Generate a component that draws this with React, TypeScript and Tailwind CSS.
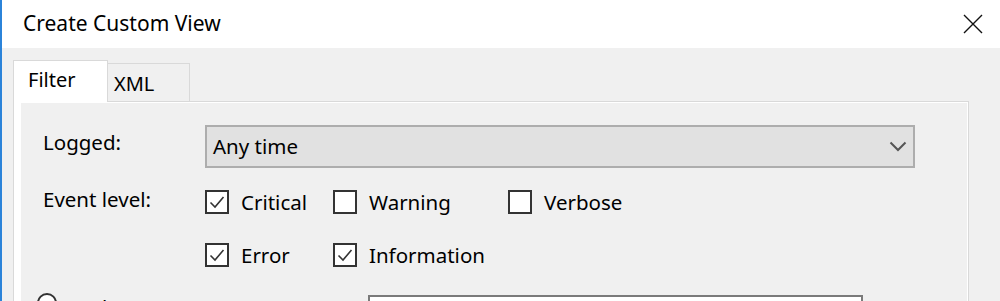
import React from 'react';

const font = { fontFamily: '"Noto Sans", "Open Sans", sans-serif' };

const CheckBox = ({ checked, label }: { checked: boolean; label: string }) => (
    <div className="flex items-center">
        <div className="w-[24px] h-[24px] border-2 border-[#333333] bg-white flex items-center justify-center">
            {checked && (
                <svg width="16" height="14" viewBox="0 0 16 14">
                    <path d="M1.5 7.5 L6 12 L14.5 2" fill="none" stroke="#333333" strokeWidth="1.6" />
                </svg>
            )}
        </div>
        <span className="ml-[12px] text-[20.5px] leading-none text-black">{label}</span>
    </div>
);

const App = () => {
    return (
        <div
            className="w-[1000px] h-[301px] overflow-hidden bg-[#f0f0f0] border-l-2 border-[#2b83d9] flex flex-col"
            style={font}
        >
            {/* title bar */}
            <div className="h-[48px] shrink-0 bg-white flex items-center justify-between pl-[21px] pr-[17px]">
                <span className="text-[21px] text-black">Create Custom View</span>
                <svg width="20" height="20" viewBox="0 0 20 20">
                    <path d="M1 1 L19 19 M19 1 L1 19" stroke="#111111" strokeWidth="1.4" />
                </svg>
            </div>

            <div className="pl-[11px] pt-[12px] pr-[31px] flex-1">
                {/* tabs */}
                <div className="flex items-end relative z-10">
                    <div className="w-[95px] h-[42px] -mb-px bg-white border border-b-0 border-[#d9d9d9] pl-[14px] pt-[4px] text-[20px] text-black">
                        Filter
                    </div>
                    <div className="w-[82px] h-[38px] border border-l-0 border-b-0 border-[#d9d9d9] bg-[#f0f0f0] pl-[6px] pt-[5px] text-[20px] text-black">
                        XML
                    </div>
                </div>

                {/* tab page */}
                <div className="border border-[#d9d9d9] bg-white pl-[7px] pt-[1px] pr-[1px] h-[220px]">
                    <div className="bg-[#f0f0f0] h-full pl-[22px] pt-[22px] text-[20.5px] text-black">
                        <div className="flex items-center h-[43px]">
                            <div className="w-[162px] -mt-[9px]">Logged:</div>
                            <div className="w-[710px] h-[43px] bg-[#e1e1e1] border-2 border-[#adadad] flex items-center justify-between pl-[6px] pr-[6px]">
                                <span>Any time</span>
                                <svg width="18" height="11" viewBox="0 0 18 11">
                                    <path d="M1.5 1.5 L9 9 L16.5 1.5" fill="none" stroke="#555555" strokeWidth="2" />
                                </svg>
                            </div>
                        </div>

                        <div className="flex mt-[22px]">
                            <div className="w-[162px] -mt-[3px] leading-[24px]">Event level:</div>
                            <div className="grid grid-cols-[128px_175px_160px] gap-y-[29px]">
                                <CheckBox checked label="Critical" />
                                <CheckBox checked={false} label="Warning" />
                                <CheckBox checked={false} label="Verbose" />
                                <CheckBox checked label="Error" />
                                <CheckBox checked label="Information" />
                            </div>
                        </div>

                        <div className="flex items-start mt-[26px]">
                            <div className="w-[162px] flex items-start -ml-[6px] mr-[6px]">
                                <div className="w-[20px] h-[20px] rounded-full border-2 border-[#333333] bg-white" />
                                <span className="ml-[16px] leading-[30px] -mt-[1px]">By log</span>
                            </div>
                            <div className="ml-[163px] mt-[2px] w-[495px] h-[40px] border-2 border-[#7a7a7a] bg-white" />
                        </div>
                    </div>
                </div>
            </div>
        </div>
    );
};

export default App;
